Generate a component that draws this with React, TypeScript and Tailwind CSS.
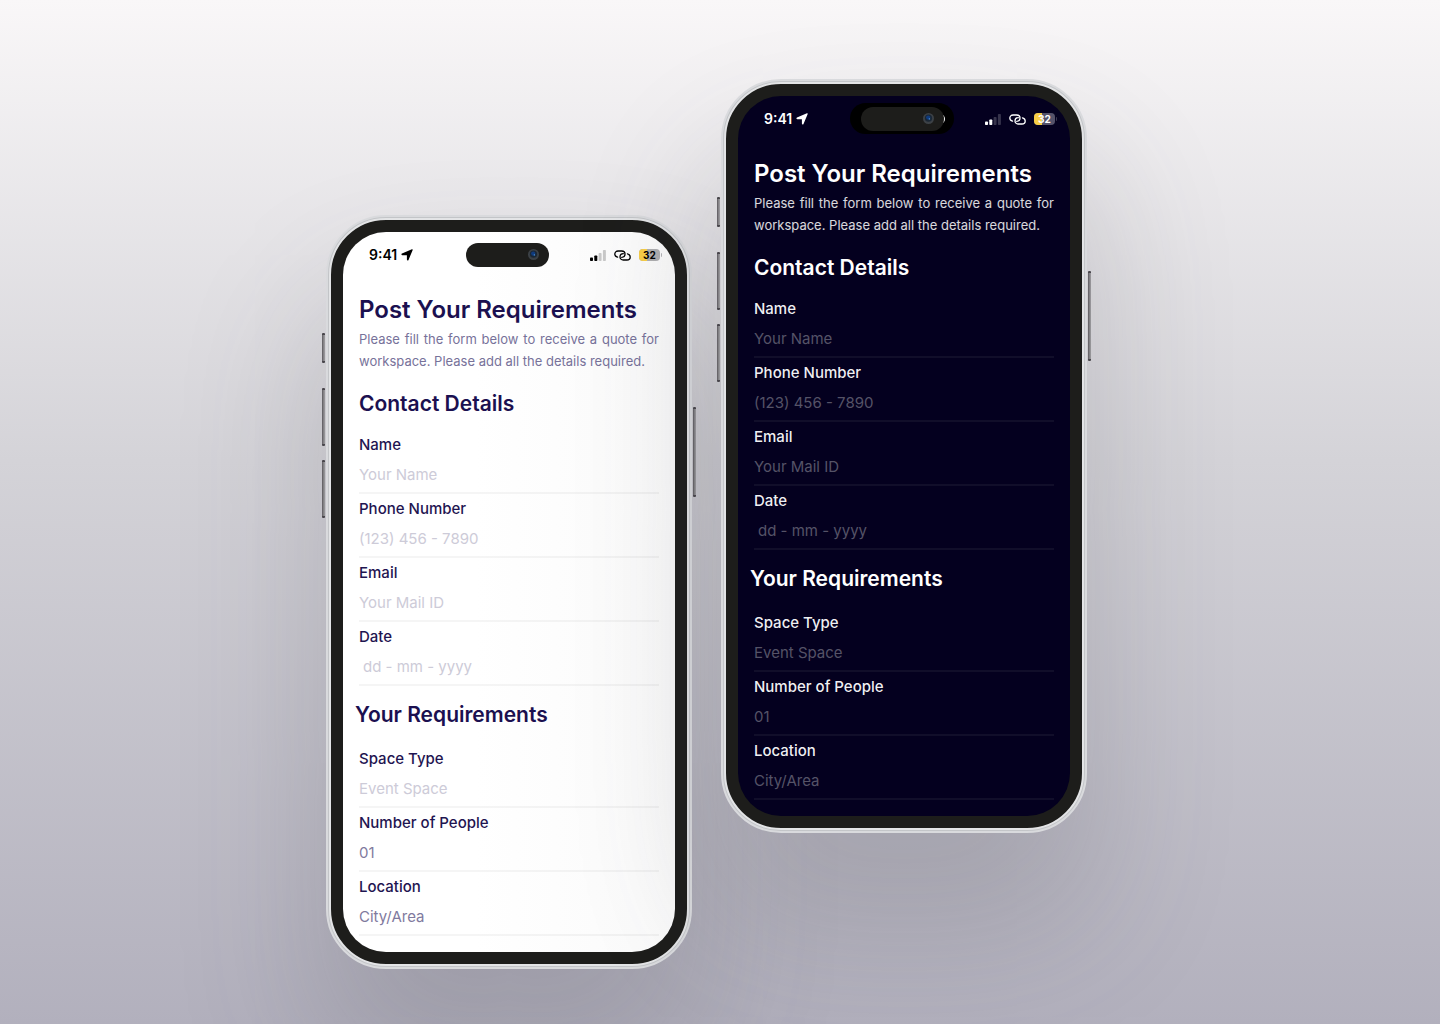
import clsx from "clsx";
import { useId } from "react";

type Theme = "light" | "dark";

type FieldItem = {
  label: string;
  placeholder: string;
  strong?: boolean;
  indent?: boolean;
};

const contactFields: FieldItem[] = [
  { label: "Name", placeholder: "Your Name" },
  { label: "Phone Number", placeholder: "(123) 456 - 7890" },
  { label: "Email", placeholder: "Your Mail ID" },
  { label: "Date", placeholder: "dd - mm - yyyy", indent: true },
];

const requirementFields: FieldItem[] = [
  { label: "Space Type", placeholder: "Event Space" },
  { label: "Number of People", placeholder: "01", strong: true },
  { label: "Location", placeholder: "City/Area", strong: true },
];

function Field({ item, theme }: { item: FieldItem; theme: Theme }) {
  const id = useId();
  const dark = theme === "dark";

  return (
    <div className={clsx("border-b-2 pb-[7px]", dark ? "border-[#110e2a]" : "border-black/4")}>
      <label
        htmlFor={id}
        className={clsx("block text-[15px] leading-5 font-medium", dark ? "text-white/95" : "text-[#1f1551]")}
      >
        {item.label}
      </label>
      <input
        id={id}
        type="text"
        placeholder={item.placeholder}
        className={clsx(
          "mt-2.5 block h-5 w-full bg-transparent text-[15px] leading-5 outline-none",
          item.indent && "pl-1",
          dark && "text-white placeholder:text-[#555367]",
          !dark && "text-[#1f1551]",
          !dark && (item.strong ? "placeholder:text-[#7f7a9e]" : "placeholder:text-[#cdcbd8]")
        )}
      />
    </div>
  );
}

function StatusBar({ theme }: { theme: Theme }) {
  const dark = theme === "dark";

  return (
    <div
      className={clsx(
        "relative flex h-[46px] items-center justify-between pr-[13px] pl-[26px]",
        dark ? "text-white" : "text-black"
      )}
    >
      <div className="flex items-center gap-1">
        <span className="text-sm leading-5 font-semibold">9:41</span>
        <svg className="h-3 w-3" viewBox="0 0 12 12" fill="currentColor" aria-hidden="true">
          <path d="M11.7 1 7.5 10.9c-.4.9-1.6.7-1.6-.3V6.5c0-.2-.1-.3-.3-.3H1.4C.3 6.2.1 5 1 4.6L10.9.3c.6-.2 1 .2.8.7z" />
        </svg>
      </div>

      {/* Dynamic island */}
      <div
        className={clsx(
          "absolute top-[7px] right-[116px] flex h-[31px] w-[104px] items-center justify-center rounded-full",
          dark && "bg-black"
        )}
      >
        {dark && <span className="absolute right-[9px] h-2.5 w-2.5 rounded-full bg-white" />}
        <div className="relative flex h-6 w-[83px] items-center justify-end rounded-full bg-[#1d1d1b] pr-2.5">
          <svg className="h-[11px] w-[11px]" viewBox="0 0 11 11" aria-hidden="true">
            <circle cx="5.5" cy="5.5" r="5.5" fill="#3c4146" />
            <circle cx="5.5" cy="5.2" r="3.6" fill="#1a2735" />
            <circle cx="5.2" cy="4.6" r="2.1" fill="#0f3a7d" />
            <circle cx="6.4" cy="5.9" r=".8" fill="#3c7fc4" />
          </svg>
        </div>
      </div>

      <div className="flex items-center gap-2">
        <svg className="h-[11px] w-4" viewBox="0 0 16 11" fill="currentColor" aria-hidden="true">
          <rect x="0" y="7.5" width="3" height="3.5" rx=".8" />
          <rect x="4.3" y="5.5" width="3" height="5.5" rx=".8" />
          <rect x="8.6" y="3" width="3" height="8" rx=".8" opacity=".2" />
          <rect x="12.9" y="0" width="3" height="11" rx=".8" opacity=".2" />
        </svg>
        {/* Personal hotspot */}
        <svg
          className="h-[11px] w-[17px]"
          viewBox="0 0 17 11"
          fill="none"
          stroke="currentColor"
          strokeWidth="1.3"
          strokeLinecap="round"
          aria-hidden="true"
        >
          <path d="M3.6 7.2C1.9 6.8.8 5.6.8 4.1.8 2.3 2.2 1 4.1 1h3.6c1.900 0 3.300 1.300 3.300 3.100S9.600 7.300 7.700 7.300" />
          <path d="M13.4 3.8c1.700.4 2.800 1.600 2.800 3.100 0 1.800-1.400 3.100-3.300 3.100H9.300C7.400 10 6 8.700 6 6.900s1.400-3.200 3.300-3.200" />
        </svg>
        <div className="flex items-center gap-px">
          <div
            className={clsx(
              "relative flex h-3 w-[21px] items-center justify-center overflow-hidden rounded",
              dark ? "bg-[#55526a]" : "bg-[#aeaeb0]"
            )}
          >
            <span className="absolute inset-y-0 left-0 w-2 bg-[#f8ce46]" />
            <span className="relative text-[10px] leading-3 font-bold">32</span>
          </div>
          <span className={clsx("h-1 w-px rounded-r-full", dark ? "bg-[#3a3750]" : "bg-[#b5b5b7]")} />
        </div>
      </div>
    </div>
  );
}

function SideButton({ className }: { className: string }) {
  return (
    <span
      className={clsx(
        "absolute w-[3px] rounded-[1px] border-y-2 border-[#4a474c] bg-linear-to-r from-[#5d5a5f] via-[#8a888b] to-[#a9a8ab]",
        className
      )}
    />
  );
}

function Phone({ theme, className }: { theme: Theme; className?: string }) {
  const dark = theme === "dark";
  const heading = dark ? "text-white" : "text-[#1b1050]";

  return (
    <div className={clsx("relative w-[366px] shrink-0", className)}>
      <SideButton className="top-[118px] -left-1 h-[30px]" />
      <SideButton className="top-[173px] -left-1 h-[58px]" />
      <SideButton className="top-[245px] -left-1 h-[58px]" />
      <SideButton className="top-[192px] -right-1 h-[90px]" />

      {/* Metal frame, then the black bezel, then the screen */}
      <div className="relative rounded-[60px] border-2 border-[#d9dadd] bg-[#c3c5c8] p-px shadow-[0_90px_140px_10px_rgba(70,68,78,0.2)]">
        <div className="rounded-[57px] border-2 border-[#e3e4e6] bg-[#1d1d1b] p-3">
          <div
            className={clsx(
              "overflow-hidden rounded-[43px] pb-4",
              dark ? "bg-[#04001f]" : "bg-linear-to-r from-white from-40% to-[#fafafa]"
            )}
          >
            <StatusBar theme={theme} />

            <form>
              <header className="mt-[17px] px-4">
                <h1 className={clsx("text-2xl leading-[30px] font-semibold whitespace-nowrap", heading)}>
                  Post Your Requirements
                </h1>
                <p
                  className={clsx(
                    "mt-[3px] text-justify text-[13px] leading-[22px]",
                    dark ? "text-white/85" : "text-[#77729a]"
                  )}
                >
                  Please fill the form below to receive a quote for workspace. Please add all the details required.
                </p>
              </header>

              <section className="mt-[18px]">
                <h2 className={clsx("px-4 text-[21px] leading-7 font-semibold", heading)}>Contact Details</h2>
                <div className="mt-[17px] space-y-[5px] px-4">
                  {contactFields.map((item) => (
                    <Field key={item.label} item={item} theme={theme} />
                  ))}
                </div>
              </section>

              <section className="mt-[15px]">
                <h2 className={clsx("px-3 text-[21px] leading-7 font-semibold", heading)}>Your Requirements</h2>
                <div className="mt-5 space-y-[5px] px-4">
                  {requirementFields.map((item) => (
                    <Field key={item.label} item={item} theme={theme} />
                  ))}
                </div>
              </section>
            </form>
          </div>
        </div>
      </div>
    </div>
  );
}

export default function App() {
  return (
    <main className="flex min-h-screen items-start justify-center gap-[29px] overflow-hidden bg-linear-to-b from-[#f9f7f8] via-[#d4d3d8] via-45% to-[#b2b0bd] pt-[79px] pr-[27px] pb-[54px] font-['Inter','Liberation_Sans',sans-serif]">
      <Phone theme="light" className="mt-[136px]" />
      <Phone theme="dark" />
    </main>
  );
}
